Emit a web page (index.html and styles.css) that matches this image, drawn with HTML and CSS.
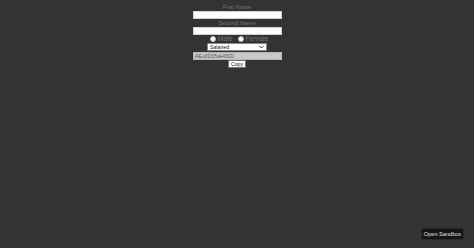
FILE: index.html
```html
<!DOCTYPE html>
<html>
<head>
<meta charset="utf-8">
<link rel="stylesheet" href="styles.css">
</head>
<body>
<div class="app">
  <label class="label first">First Name</label>
  <input class="text-input" type="text">
  <label class="label">Second Name</label>
  <input class="text-input" type="text">
  <div class="radios">
    <span class="radio"></span><span class="radio-label">Male</span>
    <span class="radio"></span><span class="radio-label">Female</span>
  </div>
  <div class="select">
    <span>Salaried</span>
    <svg class="arrow" width="5" height="4" viewBox="0 0 5 4"><path d="M0.5 1 L2.5 3 L4.5 1" fill="none" stroke="#333" stroke-width="1"/></svg>
  </div>
  <div class="output">AEu0D05aH0SD</div>
  <button class="copy">Copy</button>
</div>
<button class="sandbox">Open Sandbox</button>
</body>
</html>
```

FILE: styles.css
```css
html, body {
  margin: 0;
  padding: 0;
  height: 100%;
}
body {
  background: #333333;
  font-family: "Liberation Sans", Arial, sans-serif;
  position: relative;
  overflow: hidden;
}
.app {
  display: flex;
  flex-direction: column;
  align-items: center;
}
.label {
  display: block;
  height: 8px;
  line-height: 8px;
  font-size: 5.8px;
  color: #747474;
}
.label.first {
  margin-top: 3px;
}
.text-input {
  box-sizing: border-box;
  width: 89px;
  height: 8px;
  margin: 0 0 0 1px;
  padding: 0;
  border: 1px solid #d0d0d0;
  background: #ffffff;
  outline: none;
}
.radios {
  display: flex;
  align-items: center;
  height: 8px;
  margin-left: 4px;
}
.radio {
  box-sizing: border-box;
  width: 6px;
  height: 6px;
  margin-top: -1px;
  border-radius: 50%;
  background: #ffffff;
  border: 0.5px solid #bbbbbb;
  margin-right: 2px;
}
.radio-label {
  font-size: 6.8px;
  line-height: 8px;
  color: #747474;
  margin-right: 5px;
}
.radio-label:last-child {
  margin-right: 0;
}
.select {
  box-sizing: border-box;
  width: 60px;
  height: 8px;
  margin-top: 0;
  background: #ffffff;
  border: 1px solid #888888;
  border-radius: 1px;
  display: flex;
  align-items: center;
  justify-content: space-between;
  padding: 0 2px 0 2px;
  font-size: 5.2px;
  color: #111111;
}
.arrow {
  display: block;
}
.output {
  box-sizing: border-box;
  width: 89px;
  height: 8px;
  margin: 1px 0 0 1px;
  background: #c9c9c9;
  border: 0.5px solid #b5b5b5;
  font-size: 5.2px;
  line-height: 7px;
  color: #555555;
  padding-left: 1px;
}
.copy {
  box-sizing: border-box;
  width: 18px;
  height: 8px;
  margin: 0 0 0 0;
  padding: 0;
  background: #ffffff;
  border: 0.5px solid #777777;
  border-radius: 1px;
  font-family: "Liberation Sans", Arial, sans-serif;
  font-size: 5.2px;
  line-height: 7px;
  color: #111111;
}
.sandbox {
  position: absolute;
  right: 10px;
  bottom: 8px;
  width: 43px;
  height: 12px;
  padding: 0;
  background: #151515;
  border: 0.5px solid #2a2a2a;
  border-radius: 2px;
  color: #e0e0e0;
  font-family: "Liberation Sans", Arial, sans-serif;
  font-size: 5.6px;
}
```
